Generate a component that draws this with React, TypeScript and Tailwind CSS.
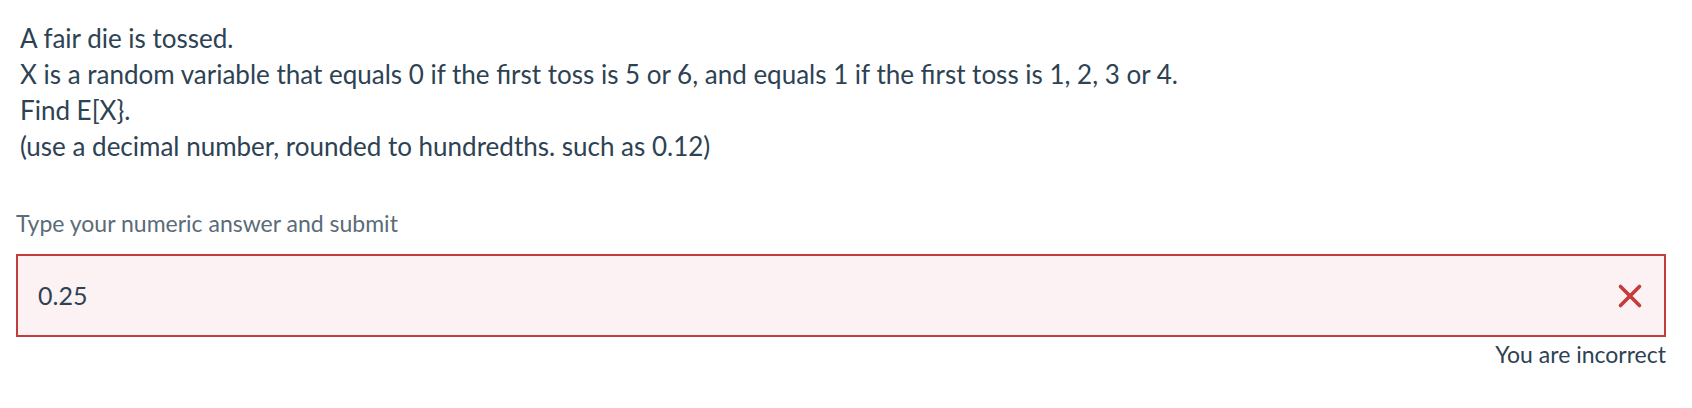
import { X } from "lucide-react";

const question = [
  "A fair die is tossed.",
  "X is a random variable that equals 0 if the first toss is 5 or 6, and equals 1 if the first toss is 1, 2, 3 or 4.",
  "Find E[X}.",
  "(use a decimal number, rounded to hundredths. such as 0.12)",
];

export default function App() {
  return (
    <div className="h-[408px] w-[1692px] bg-white pl-4 pr-[26px] pt-[20px] font-['Lato','Liberation_Sans',sans-serif] text-[#2d4253]">
      <div className="pl-1 text-[26px] leading-[36px]">
        {question.map((line) => (
          <p key={line}>{line}</p>
        ))}
      </div>

      <p className="mt-[45px] text-[23px] leading-[28px] text-[#5b6b78]">
        Type your numeric answer and submit
      </p>

      <div className="mt-[17px] flex h-[83px] items-center border-2 border-[#c43d3d] bg-[#fdf2f3] pl-[20px] pr-[15px]">
        <span className="flex-1 text-[25px]">0.25</span>
        <X className="h-[38px] w-[38px] text-[#c43d3d]" strokeWidth={2.3} />
      </div>

      <p className="mt-[2px] text-right text-[23px] leading-[30px]">You are incorrect</p>
    </div>
  );
}
